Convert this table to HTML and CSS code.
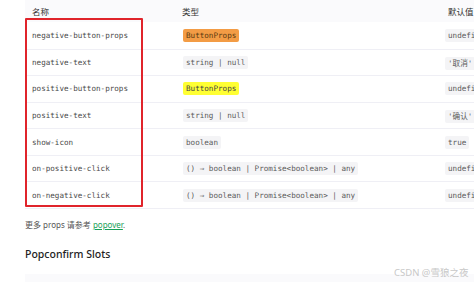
FILE: index.html
```html
<!DOCTYPE html>
<html>
<head>
<meta charset="utf-8">
<link rel="stylesheet" href="styles.css">
</head>
<body>
<div class="page">
  <div class="table-wrap">
    <table class="props">
      <thead>
        <tr><th class="c-name">名称</th><th class="c-type">类型</th><th class="c-def">默认值</th></tr>
      </thead>
      <tbody>
        <tr><td>negative-button-props</td><td><code class="hl-orange">ButtonProps</code></td><td><code>undefined</code></td></tr>
        <tr><td>negative-text</td><td><code>string | null</code></td><td><code>'取消'</code></td></tr>
        <tr><td>positive-button-props</td><td><code class="hl-yellow">ButtonProps</code></td><td><code>undefined</code></td></tr>
        <tr><td>positive-text</td><td><code>string | null</code></td><td><code>'确认'</code></td></tr>
        <tr><td>show-icon</td><td><code>boolean</code></td><td><code>true</code></td></tr>
        <tr><td>on-positive-click</td><td><code>() ⇒ boolean | Promise&lt;boolean&gt; | any</code></td><td><code>undefined</code></td></tr>
        <tr><td>on-negative-click</td><td><code>() ⇒ boolean | Promise&lt;boolean&gt; | any</code></td><td><code>undefined</code></td></tr>
      </tbody>
    </table>
    <div class="mark"></div>
  </div>
  <p class="note">更多 props 请参考 <a href="#">popover</a>.</p>
  <h3 class="title">Popconfirm Slots</h3>
  <div class="next-table"></div>
</div>
<div class="watermark">CSDN @雪狼之夜</div>
</body>
</html>
```
FILE: styles.css
```css
html, body { margin: 0; padding: 0; background: #fff; overflow: hidden; }
body { width: 474px; height: 282px; position: relative; font-family: "Noto Sans", "Noto Sans CJK SC", sans-serif; }
.page { padding-left: 25px; }
.table-wrap { position: relative; width: 700px; }
.props { border-collapse: collapse; width: 700px; table-layout: fixed; }
.props th { background: #fafafc; font-weight: normal; text-align: left; font-size: 8.5px; color: #333; height: 22px; padding: 0 0 0 7px; font-family: "Noto Sans CJK SC", sans-serif; vertical-align: middle; }
.props th.c-name { width: 146px; }
.props th.c-type { width: 263px; padding-left: 4px; }
.props th.c-def { padding-left: 3px; }
.props td { font-family: "DejaVu Sans Mono", monospace; font-size: 7.6px; color: #4a4a4a; height: 25.6px; padding: 0 0 0 7px; border-bottom: 1px solid #efeff5; vertical-align: middle; white-space: nowrap; }
.props td:nth-child(2) { padding-left: 5px; }
.props td:nth-child(3) { padding-left: 0; }
.props tbody tr:first-child td { height: 26.5px; }
code { font-family: "DejaVu Sans Mono", "Noto Sans CJK SC", monospace; font-size: 7.6px; background: #f4f4f6; padding: 2px 3px; border-radius: 2px; color: #5a5a5a; }
code.hl-orange { background: #f39c45; color: #5a3a10; }
code.hl-yellow { background: #ffff33; color: #444; }
.mark { position: absolute; left: 0; top: 18px; width: 114px; height: 185px; border: 2px solid #e0242b; border-radius: 1px; }
.note { margin: 10px 0 0 0; font-size: 8px; color: #555; font-family: "Noto Sans", "Noto Sans CJK SC", sans-serif; }
.note a { color: #18a058; text-decoration: underline; }
.title { margin: 17px 0 0 0; font-size: 10.5px; font-weight: 500; color: #222; font-family: "Noto Sans", sans-serif; }
.next-table { margin-top: 13px; height: 10px; background: #fafafc; width: 700px; }
.watermark { position: absolute; left: 394px; top: 265px; font-size: 9.5px; color: #c8c8c8; font-family: "Noto Sans", "Noto Sans CJK SC", sans-serif; }
```
